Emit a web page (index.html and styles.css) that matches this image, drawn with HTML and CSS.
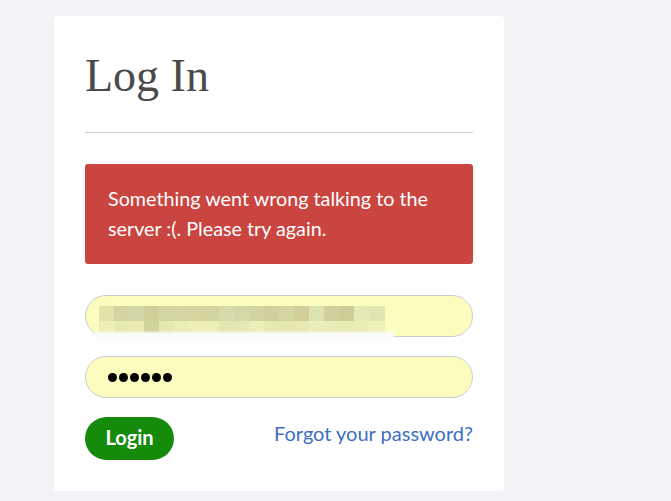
FILE: index.html
```html
<!DOCTYPE html>
<html lang="en">
<head>
<meta charset="utf-8">
<title>Log In</title>
<link rel="stylesheet" href="styles.css">
</head>
<body>
<main class="card">
  <h1 class="title">Log In</h1>
  <hr class="rule">
  <div class="alert">Something went wrong talking to the server :(. Please try again.</div>
  <form class="form">
    <div class="field field-email">
      <div class="blur">
        <div class="blur-row r1"></div>
        <div class="blur-row r2"></div>
      </div>
      <div class="smudge"></div>
    </div>
    <div class="field field-pass">
      <span class="dot"></span><span class="dot"></span><span class="dot"></span><span class="dot"></span><span class="dot"></span><span class="dot"></span>
    </div>
    <div class="actions">
      <button type="button" class="btn">Login</button>
      <a class="forgot" href="#">Forgot your password?</a>
    </div>
  </form>
</main>
</body>
</html>
```

FILE: styles.css
```css
html, body {
  margin: 0;
  padding: 0;
  background: #f2f3f7;
}
body {
  font-family: Lato, "Liberation Sans", sans-serif;
  padding: 16px 0 0 54px;
  height: 501px;
  box-sizing: border-box;
  overflow: hidden;
}
.card {
  width: 450px;
  box-sizing: border-box;
  background: #ffffff;
  border-radius: 4px;
  padding: 34px 31px 31px 31px;
}
.title {
  margin: 0;
  font-family: "Liberation Serif", serif;
  font-weight: normal;
  font-size: 46px;
  line-height: 52px;
  color: #4a4a4a;
}
.rule {
  margin: 30px 0 0 0;
  border: 0;
  height: 1px;
  background: #cfcfcf;
}
.alert {
  margin-top: 31px;
  background: #cb4540;
  color: #ffffff;
  border-radius: 3px;
  padding: 20px 23px;
  font-size: 19.75px;
  line-height: 30px;
}
.form {
  margin-top: 31px;
  display: flex;
  flex-direction: column;
  gap: 19px;
}
.field {
  position: relative;
  height: 42px;
  box-sizing: border-box;
  border: 1px solid #cccccc;
  border-radius: 21px;
  background: #fafdbe;
  display: flex;
  align-items: center;
}
.blur {
  position: absolute;
  left: 13px;
  top: 10px;
  width: 286px;
}
.blur-row {
  height: 15px;
}
.r1 {
  background: linear-gradient(to right,
    #e2e3ab 0 15px, #d3d49f 15px 30px, #d2d7a5 30px 45px, #cfcf9a 45px 60px,
    #d3d6a0 60px 75px, #d5d6a2 75px 90px, #d8d49f 90px 105px, #d3d49f 105px 120px,
    #d5dba9 120px 135px, #d3d8a6 135px 150px, #d2d4a0 150px 165px, #cfd09c 165px 180px,
    #d4d6a2 180px 195px, #d3cf9a 195px 210px, #dde3b0 210px 225px, #d0d09a 225px 240px,
    #cdcd98 240px 255px, #e5e9b5 255px 270px, #e2e5b0 270px 286px);
}
.r2 {
  background: linear-gradient(to right,
    #ecefb6 0 15px, #e6e9b0 15px 30px, #e9ebb3 30px 45px, #d1d39d 45px 60px,
    #e6e8b1 60px 75px, #eaedb6 75px 90px, #ecefb7 90px 105px, #eceeb7 105px 120px,
    #e4e8b0 120px 135px, #e5e8b2 135px 150px, #ecefb7 150px 165px, #e6eab2 165px 180px,
    #e5e8b1 180px 195px, #e7e9b3 195px 210px, #ebeeb8 210px 225px, #e9ecb6 225px 240px,
    #e7ebb4 240px 255px, #eaedb5 255px 270px, #edf0b9 270px 286px);
}
.smudge {
  position: absolute;
  left: 8px;
  top: 36px;
  width: 300px;
  height: 10px;
  background: #fbfbfb;
  border-radius: 0 0 40px 60px;
  filter: blur(1px);
}
.field-pass {
  padding-left: 22px;
  gap: 2px;
}
.dot {
  width: 9px;
  height: 9px;
  border-radius: 50%;
  background: #000000;
}
.actions {
  display: flex;
  align-items: center;
  justify-content: space-between;
}
.btn {
  width: 89px;
  height: 43px;
  border: 0;
  border-radius: 22px;
  background: #168a0b;
  color: #ffffff;
  font-family: Lato, "Liberation Sans", sans-serif;
  font-weight: bold;
  font-size: 20px;
  padding: 0 0 3px 0;
  cursor: pointer;
}
.forgot {
  color: #3d6fc1;
  text-decoration: none;
  font-size: 20px;
  margin-top: -11px;
}
```
